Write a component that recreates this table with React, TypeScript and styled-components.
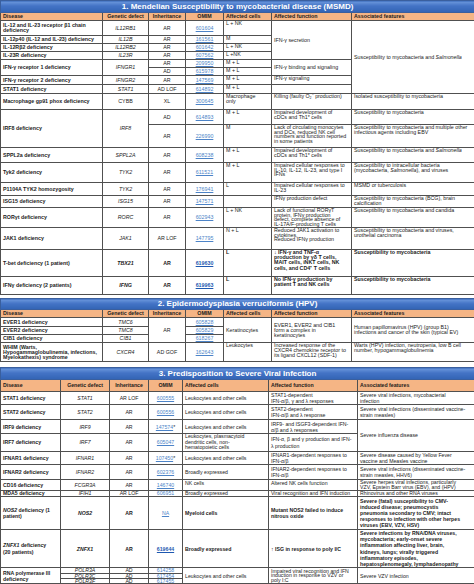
import React from 'react';
import styled, { createGlobalStyle } from 'styled-components';

const GlobalStyle = createGlobalStyle`
  html, body {
    margin: 0;
    padding: 0;
    background: #fff;
  }
  body {
    font-family: "Liberation Sans", Arial, sans-serif;
    color: #1b1b1b;
  }
`;

const Page = styled.div`
  width: 474px;
  height: 584px;
  overflow: hidden;
`;

const Table = styled.table<{ $fs: number; $lh: number; $gap?: number }>`
  width: 474px;
  table-layout: fixed;
  border-collapse: collapse;
  font-family: "Liberation Sans", Arial, sans-serif;
  font-size: ${(p) => p.$fs}px;
  line-height: ${(p) => p.$lh}px;
  margin-top: ${(p) => p.$gap ?? 0}px;
`;

const Col = styled.col<{ $w: number }>`
  width: ${(p) => p.$w}px;
`;

const Row = styled.tr<{ $h: number }>`
  height: ${(p) => p.$h}px;
`;

const Title = styled.th`
  background: linear-gradient(#6b97dc 0%, #4474c6 40%, #3263b4 100%);
  color: #fff;
  font-size: 8px;
  line-height: 8px;
  font-weight: 700;
  text-align: center;
  border: 1px solid #3a5f9e;
  padding: 0;
`;

const Head = styled.th<{ $center?: boolean }>`
  background: #f5b585;
  border: 1px solid #505050;
  font-weight: 700;
  text-align: ${(p) => (p.$center ? 'center' : 'left')};
  vertical-align: middle;
  padding: 0 2px;
  white-space: nowrap;
`;

const Cell = styled.td<{ $top?: boolean; $bold?: boolean; $lh?: number }>`
  border: 1px solid #505050;
  padding: 0 2px;
  text-align: left;
  vertical-align: ${(p) => (p.$top ? 'top' : 'middle')};
  font-weight: ${(p) => (p.$bold ? 700 : 400)};
  ${(p) => (p.$lh ? `line-height: ${p.$lh}px;` : '')}
  overflow: hidden;
`;

const Disease = styled(Cell)`
  font-weight: 700;
`;

const Mid = styled(Cell)`
  text-align: center;
`;

const Gene = styled(Mid)`
  font-style: italic;
`;

const Omim = styled.a<{ $strong?: boolean }>`
  color: ${(p) => (p.$strong ? '#1d58b0' : '#4d84c8')};
  font-weight: ${(p) => (p.$strong ? 700 : 400)};
  text-decoration: underline;
`;

const HeadRow = ({ h }: { h: number }) => (
  <Row $h={h}>
    <Head>Disease</Head>
    <Head $center>Genetic defect</Head>
    <Head $center>Inheritance</Head>
    <Head $center>OMIM</Head>
    <Head>Affected cells</Head>
    <Head>Affected function</Head>
    <Head>Associated features</Head>
  </Row>
);

const colsTop = [102, 46, 37, 38, 48, 80, 123];
const colsViral = [60, 49, 39, 34, 86, 89, 117];

const Msmd = () => (
  <Table $fs={5.3} $lh={4.7}>
    <colgroup>
      {colsTop.map((w, i) => (
        <Col key={i} $w={w} />
      ))}
    </colgroup>
    <tbody>
      <Row $h={12}>
        <Title colSpan={7}>1. Mendelian Susceptibility to mycobacterial disease (MSMD)</Title>
      </Row>
      <HeadRow h={8} />
      <Row $h={15}>
        <Disease>
          IL-12 and IL-23 receptor β1 chain
          <br />
          deficiency
        </Disease>
        <Gene>IL12RB1</Gene>
        <Mid>AR</Mid>
        <Mid><Omim>601604</Omim></Mid>
        <Cell $top>L + NK</Cell>
        <Cell rowSpan={4}>IFN-γ secretion</Cell>
        <Cell rowSpan={8}>
          Susceptibility to mycobacteria and <i>Salmonella</i>
        </Cell>
      </Row>
      <Row $h={8}>
        <Disease>IL-12p40 (IL-12 and IL-23) deficiency</Disease>
        <Gene>IL12B</Gene>
        <Mid>AR</Mid>
        <Mid><Omim>161561</Omim></Mid>
        <Cell $top>M</Cell>
      </Row>
      <Row $h={8}>
        <Disease>IL-12Rβ2 deficiency</Disease>
        <Gene>IL12RB2</Gene>
        <Mid>AR</Mid>
        <Mid><Omim>601642</Omim></Mid>
        <Cell $top>L + NK</Cell>
      </Row>
      <Row $h={8}>
        <Disease>IL-23R deficiency</Disease>
        <Gene>IL23R</Gene>
        <Mid>AR</Mid>
        <Mid><Omim>607562</Omim></Mid>
        <Cell $top>L +NK</Cell>
      </Row>
      <Row $h={8}>
        <Disease rowSpan={2}>IFN-γ receptor 1 deficiency</Disease>
        <Gene rowSpan={2}>IFNGR1</Gene>
        <Mid>AR</Mid>
        <Mid><Omim>209950</Omim></Mid>
        <Cell $top>M + L</Cell>
        <Cell rowSpan={2}>IFN-γ binding and signaling</Cell>
      </Row>
      <Row $h={8}>
        <Mid>AD</Mid>
        <Mid><Omim>615978</Omim></Mid>
        <Cell $top>M + L</Cell>
      </Row>
      <Row $h={9}>
        <Disease>IFN-γ receptor 2 deficiency</Disease>
        <Gene>IFNGR2</Gene>
        <Mid>AR</Mid>
        <Mid><Omim>147569</Omim></Mid>
        <Cell $top>M + L</Cell>
        <Cell $top>IFN-γ signaling</Cell>
      </Row>
      <Row $h={9}>
        <Disease>STAT1 deficiency</Disease>
        <Gene>STAT1</Gene>
        <Mid>AD LOF</Mid>
        <Mid><Omim>614892</Omim></Mid>
        <Cell $top>M + L</Cell>
        <Cell />
      </Row>
      <Row $h={16}>
        <Disease>Macrophage gp91 phox deficiency</Disease>
        <Mid>CYBB</Mid>
        <Mid>XL</Mid>
        <Mid><Omim>300645</Omim></Mid>
        <Cell $top>
          Macrophage
          <br />
          only
        </Cell>
        <Cell $top>Killing (faulty O₂⁻ production)</Cell>
        <Cell $top>Isolated susceptibility to mycobacteria</Cell>
      </Row>
      <Row $h={15}>
        <Disease rowSpan={2}>IRF8 deficiency</Disease>
        <Gene rowSpan={2}>IRF8</Gene>
        <Mid>AD</Mid>
        <Mid><Omim>614893</Omim></Mid>
        <Cell $top>M + L</Cell>
        <Cell $top>
          Impaired development of
          <br />
          cDCs and Th1* cells
        </Cell>
        <Cell $top>Susceptibility to mycobacteria</Cell>
      </Row>
      <Row $h={23}>
        <Mid>AR</Mid>
        <Mid><Omim>226990</Omim></Mid>
        <Cell $top>M</Cell>
        <Cell $top>
          Lack of circulating monocytes
          <br />
          and DCs, reduced NK cell
          <br />
          numbers and function reported
          <br />
          in some patients
        </Cell>
        <Cell $top>
          Susceptibility to mycobacteria and multiple other
          <br />
          infectious agents including EBV
        </Cell>
      </Row>
      <Row $h={15}>
        <Disease>SPPL2a deficiency</Disease>
        <Gene>SPPL2A</Gene>
        <Mid>AR</Mid>
        <Mid><Omim>608238</Omim></Mid>
        <Cell $top>M + L</Cell>
        <Cell $top>
          Impaired development of
          <br />
          cDCs and Th1* cells
        </Cell>
        <Cell $top>
          Susceptibility to mycobacteria and <i>Salmonella</i>
        </Cell>
      </Row>
      <Row $h={20}>
        <Disease>Tyk2 deficiency</Disease>
        <Gene>TYK2</Gene>
        <Mid>AR</Mid>
        <Mid><Omim>611521</Omim></Mid>
        <Cell $top>M + L</Cell>
        <Cell $top>
          Impaired cellular responses to
          <br />
          IL-10, IL-12, IL-23, and type I
          <br />
          IFNs
        </Cell>
        <Cell $top>
          Susceptibility to intracellular bacteria
          <br />
          (mycobacteria, <i>Salmonella</i>), and viruses
        </Cell>
      </Row>
      <Row $h={13}>
        <Disease>P1104A TYK2 homozygosity</Disease>
        <Gene>TYK2</Gene>
        <Mid>AR</Mid>
        <Mid><Omim>176941</Omim></Mid>
        <Cell $top>L</Cell>
        <Cell $top>
          Impaired cellular responses to
          <br />
          IL-23
        </Cell>
        <Cell $top>MSMD or tuberculosis</Cell>
      </Row>
      <Row $h={12}>
        <Disease>ISG15 deficiency</Disease>
        <Gene>ISG15</Gene>
        <Mid>AR</Mid>
        <Mid><Omim>147571</Omim></Mid>
        <Cell $top />
        <Cell $top>IFNγ production defect</Cell>
        <Cell $top>
          Susceptibility to mycobacteria (BCG), brain
          <br />
          calcification
        </Cell>
      </Row>
      <Row $h={20}>
        <Disease>RORγt deficiency</Disease>
        <Gene>RORC</Gene>
        <Mid>AR</Mid>
        <Mid><Omim>602943</Omim></Mid>
        <Cell $top>L + NK</Cell>
        <Cell $top>
          Lack of functional RORγT
          <br />
          protein, IFNγ production
          <br />
          defect, complete absence of
          <br />
          IL-17A/F-producing T cells
        </Cell>
        <Cell $top>Susceptibility to mycobacteria and candida</Cell>
      </Row>
      <Row $h={22}>
        <Disease>JAK1 deficiency</Disease>
        <Gene>JAK1</Gene>
        <Mid>AR LOF</Mid>
        <Mid><Omim>147795</Omim></Mid>
        <Cell $top>N + L</Cell>
        <Cell $top>
          Reduced JAK1 activation to
          <br />
          cytokines,
          <br />
          Reduced IFNγ production
        </Cell>
        <Cell $top>
          Susceptibility to mycobacteria and viruses,
          <br />
          urothelial carcinoma
        </Cell>
      </Row>
      <Row $h={27}>
        <Disease>T-bet deficiency (1 patient)</Disease>
        <Gene $bold>TBX21</Gene>
        <Mid $bold>AR</Mid>
        <Mid><Omim $strong>619630</Omim></Mid>
        <Cell $top $bold>L</Cell>
        <Cell $top $bold $lh={5.2}>
          ↓ IFN-γ and TNF-α
          <br />
          production by γδ T cells,
          <br />
          MAIT cells, iNKT cells, NK
          <br />
          cells, and CD4⁺ T cells
        </Cell>
        <Cell $top $bold>Susceptibility to mycobacteria</Cell>
      </Row>
      <Row $h={18}>
        <Disease>IFNγ deficiency (2 patients)</Disease>
        <Gene $bold>IFNG</Gene>
        <Mid $bold>AR</Mid>
        <Mid><Omim $strong>619963</Omim></Mid>
        <Cell $top $bold>L</Cell>
        <Cell $top $bold $lh={5.2}>
          No IFN-γ production by
          <br />
          patient T and NK cells
        </Cell>
        <Cell $top $bold>Susceptibility to mycobacteria</Cell>
      </Row>
    </tbody>
  </Table>
);

const Hpv = () => (
  <Table $fs={5.3} $lh={5} $gap={3}>
    <colgroup>
      {colsTop.map((w, i) => (
        <Col key={i} $w={w} />
      ))}
    </colgroup>
    <tbody>
      <Row $h={11}>
        <Title colSpan={7}>2. Epidermodysplasia verruciformis (HPV)</Title>
      </Row>
      <HeadRow h={8} />
      <Row $h={9}>
        <Disease>EVER1 deficiency</Disease>
        <Gene>TMC6</Gene>
        <Mid rowSpan={3}>AR</Mid>
        <Mid><Omim>605828</Omim></Mid>
        <Cell rowSpan={3}>Keratinocytes</Cell>
        <Cell rowSpan={3}>
          EVER1, EVER2 and CIB1
          <br />
          form a complex in
          <br />
          keratinocytes
        </Cell>
        <Cell rowSpan={3}>
          Human papillomavirus (HPV) (group B1)
          <br />
          infections and cancer of the skin (typical EV)
        </Cell>
      </Row>
      <Row $h={8}>
        <Disease>EVER2 deficiency</Disease>
        <Gene>TMC8</Gene>
        <Mid><Omim>605829</Omim></Mid>
      </Row>
      <Row $h={8}>
        <Disease>CIB1 deficiency</Disease>
        <Gene>CIB1</Gene>
        <Mid><Omim>618267</Omim></Mid>
      </Row>
      <Row $h={19}>
        <Disease>
          WHIM (Warts,
          <br />
          Hypogammaglobulinemia, infections,
          <br />
          Myelokathexis) syndrome
        </Disease>
        <Gene>CXCR4</Gene>
        <Mid>AD GOF</Mid>
        <Mid><Omim>162643</Omim></Mid>
        <Cell $top>Leukocytes</Cell>
        <Cell $top>
          Increased response of the
          <br />
          CXCR4 chemokine receptor to
          <br />
          its ligand CXCL12 (SDF-1)
        </Cell>
        <Cell $top>
          Warts (HPV) infection, neutropenia, low B cell
          <br />
          number, hypogammaglobulinemia
        </Cell>
      </Row>
    </tbody>
  </Table>
);

const Viral = () => (
  <Table $fs={5.2} $lh={6.2} $gap={5}>
    <colgroup>
      {colsViral.map((w, i) => (
        <Col key={i} $w={w} />
      ))}
    </colgroup>
    <tbody>
      <Row $h={12}>
        <Title colSpan={7}>3. Predisposition to Severe Viral Infection</Title>
      </Row>
      <HeadRow h={12} />
      <Row $h={12}>
        <Disease>STAT1 deficiency</Disease>
        <Gene>STAT1</Gene>
        <Mid>AR LOF</Mid>
        <Mid><Omim>600555</Omim></Mid>
        <Cell>Leukocytes and other cells</Cell>
        <Cell>
          STAT1-dependent
          <br />
          IFN-α/β, γ and λ responses
        </Cell>
        <Cell>
          Severe viral infections, mycobacterial
          <br />
          infection
        </Cell>
      </Row>
      <Row $h={15}>
        <Disease>STAT2 deficiency</Disease>
        <Gene>STAT2</Gene>
        <Mid>AR</Mid>
        <Mid><Omim>600556</Omim></Mid>
        <Cell>Leukocytes and other cells</Cell>
        <Cell>
          STAT2-dependent
          <br />
          IFN-α/β and λ response
        </Cell>
        <Cell>
          Severe viral infections (disseminated vaccine-
          <br />
          strain measles)
        </Cell>
      </Row>
      <Row $h={14}>
        <Disease>IRF9 deficiency</Disease>
        <Gene>IRF9</Gene>
        <Mid>AR</Mid>
        <Mid><Omim>147574</Omim>*</Mid>
        <Cell>Leukocytes and other cells</Cell>
        <Cell>
          IRF9- and ISGF3-dependent IFN-
          <br />
          α/β and λ responses
        </Cell>
        <Cell rowSpan={2}>Severe influenza disease</Cell>
      </Row>
      <Row $h={17}>
        <Disease>IRF7 deficiency</Disease>
        <Gene>IRF7</Gene>
        <Mid>AR</Mid>
        <Mid><Omim>605047</Omim></Mid>
        <Cell $lh={5.4}>
          Leukocytes, plasmacytoid
          <br />
          dendritic cells, non-
          <br />
          hematopoietic cells
        </Cell>
        <Cell>
          IFN-α, β and γ production and IFN-
          <br />
          λ production
        </Cell>
      </Row>
      <Row $h={13}>
        <Disease>IFNAR1 deficiency</Disease>
        <Gene>IFNAR1</Gene>
        <Mid>AR</Mid>
        <Mid><Omim>107450</Omim>*</Mid>
        <Cell>Leukocytes and other cells</Cell>
        <Cell>
          IFNAR1-dependent responses to
          <br />
          IFN-α/β
        </Cell>
        <Cell>
          Severe disease caused by Yellow Fever
          <br />
          vaccine and Measles vaccine
        </Cell>
      </Row>
      <Row $h={15}>
        <Disease>IFNAR2 deficiency</Disease>
        <Gene>IFNAR2</Gene>
        <Mid>AR</Mid>
        <Mid><Omim>602376</Omim></Mid>
        <Cell>Broadly expressed</Cell>
        <Cell>
          IFNAR2-dependent responses to
          <br />
          IFN-α/β
        </Cell>
        <Cell>
          Severe viral infections (disseminated vaccine-
          <br />
          strain measles, HHV6)
        </Cell>
      </Row>
      <Row $h={11}>
        <Disease>CD16 deficiency</Disease>
        <Gene>FCGR3A</Gene>
        <Mid>AR</Mid>
        <Mid><Omim>146740</Omim></Mid>
        <Cell $top>NK cells</Cell>
        <Cell $top>Altered NK cells function</Cell>
        <Cell $lh={5}>
          Severe herpes viral infections, particularly
          <br />
          VZV, Epstein Barr virus (EBV), and (HPV)
        </Cell>
      </Row>
      <Row $h={6}>
        <Disease $lh={5}>MDA5 deficiency</Disease>
        <Gene $lh={5}>IFIH1</Gene>
        <Mid $lh={5}>AR LOF</Mid>
        <Mid $lh={5}><Omim>606951</Omim></Mid>
        <Cell $lh={5}>Broadly expressed</Cell>
        <Cell $lh={5}>Viral recognition and IFN induction</Cell>
        <Cell $lh={5}>Rhinovirus and other RNA viruses</Cell>
      </Row>
      <Row $h={33}>
        <Disease>
          <i>NOS2</i> deficiency (1
          <br />
          patient)
        </Disease>
        <Gene $bold>NOS2</Gene>
        <Mid $bold>AR</Mid>
        <Mid><Omim>NA</Omim></Mid>
        <Cell $bold>Myeloid cells</Cell>
        <Cell $bold>
          Mutant NOS2 failed to induce
          <br />
          nitrous oxide
        </Cell>
        <Cell $bold>
          Severe (fatal) susceptibility to CMV-
          <br />
          induced disease; pneumocystis
          <br />
          pneumonia secondary to CMV; intact
          <br />
          responses to infection with other herpes
          <br />
          viruses (EBV, VZV, HSV)
        </Cell>
      </Row>
      <Row $h={38}>
        <Disease>
          <i>ZNFX1</i> deficiency
          <br />
          (20 patients)
        </Disease>
        <Gene $bold>ZNFX1</Gene>
        <Mid $bold>AR</Mid>
        <Mid><Omim $strong>619644</Omim></Mid>
        <Cell $bold>Broadly expressed</Cell>
        <Cell $bold>↑ ISG in response to poly I/C</Cell>
        <Cell $bold>
          Severe infections by RNA/DNA viruses,
          <br />
          mycobacteria; early-onset severe
          <br />
          inflammation affecting liver, brain,
          <br />
          kidneys, lungs; virally triggered
          <br />
          inflammatory episodes,
          <br />
          hepatosplenomegaly, lymphadenopathy
        </Cell>
      </Row>
      <Row $h={5}>
        <Disease rowSpan={3}>
          RNA polymerase III
          <br />
          deficiency
        </Disease>
        <Gene $lh={4.4}>POLR3A</Gene>
        <Mid $lh={4.4}>AD</Mid>
        <Mid $lh={4.4}><Omim>614258</Omim></Mid>
        <Cell rowSpan={3}>Leukocytes and other cells</Cell>
        <Cell rowSpan={3} $lh={4.8}>
          Impaired viral recognition and IFN
          <br />
          induction in response to VZV or
          <br />
          poly I:C
        </Cell>
        <Cell rowSpan={3}>Severe VZV infection</Cell>
      </Row>
      <Row $h={5}>
        <Gene $lh={4.4}>POLR3C</Gene>
        <Mid $lh={4.4}>AD</Mid>
        <Mid $lh={4.4}><Omim>617454</Omim></Mid>
      </Row>
      <Row $h={5}>
        <Gene $lh={4.4}>POLR3F</Gene>
        <Mid $lh={4.4}>AD</Mid>
        <Mid $lh={4.4}><Omim>617455</Omim></Mid>
      </Row>
    </tbody>
  </Table>
);

export default function App() {
  return (
    <Page>
      <GlobalStyle />
      <Msmd />
      <Hpv />
      <Viral />
    </Page>
  );
}
